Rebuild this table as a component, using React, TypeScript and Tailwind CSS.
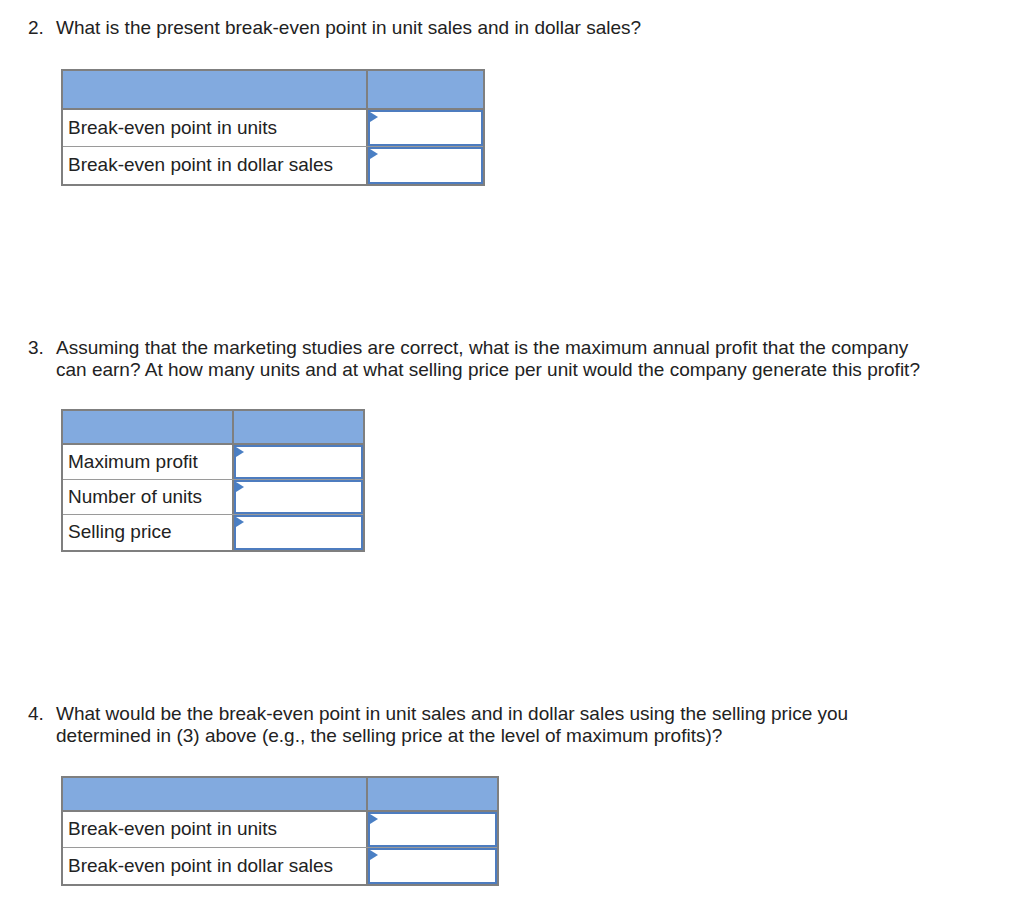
import React from 'react';

interface AnswerTableProps {
  rows: string[];
  labelWidth: number;
  valueWidth: number;
  headerHeight: number;
  rowHeight: number;
}

function InputCell() {
  return (
    <div className="relative h-full w-full border-2 border-[#4d7cbf] bg-white">
      <svg className="absolute left-0 top-0" width="8" height="11" viewBox="0 0 8 11">
        <polygon points="0,0 8,5 0,10" fill="#4a7fc4" />
      </svg>
    </div>
  );
}

function AnswerTable({ rows, labelWidth, valueWidth, headerHeight, rowHeight }: AnswerTableProps) {
  return (
    <div className="ml-[61px] inline-block border-2 border-[#7f7f7f] bg-white">
      <div className="flex border-b-2 border-[#7f7f7f] bg-[#82aadf]" style={{ height: headerHeight - 2 }}>
        <div className="border-r-2 border-[#7f7f7f]" style={{ width: labelWidth }} />
        <div style={{ width: valueWidth }} />
      </div>
      {rows.map((label, i) => (
        <div
          key={label}
          className={`flex ${i < rows.length - 1 ? 'border-b border-[#9a9a9a]' : ''}`}
          style={{ height: rowHeight }}
        >
          <div
            className="flex items-center border-r-2 border-[#7f7f7f] pl-[5px] text-[19px] text-[#222]"
            style={{ width: labelWidth }}
          >
            {label}
          </div>
          <div style={{ width: valueWidth }}>
            <InputCell />
          </div>
        </div>
      ))}
    </div>
  );
}

function Question({ num, children }: { num: string; children: React.ReactNode }) {
  return (
    <div className="flex text-[19px] leading-[22px] text-[#222]">
      <div className="w-[56px] shrink-0 pl-[28px]">{num}</div>
      <div className="w-[900px]">{children}</div>
    </div>
  );
}

export default function App() {
  return (
    <div className="min-h-[923px] w-[1024px] bg-white pt-[17px]" style={{ fontFamily: '"Liberation Sans", Arial, sans-serif' }}>
      <Question num="2.">What is the present break-even point in unit sales and in dollar sales?</Question>
      <div className="mt-[30px]">
        <AnswerTable
          rows={['Break-even point in units', 'Break-even point in dollar sales']}
          labelWidth={305}
          valueWidth={115}
          headerHeight={41}
          rowHeight={37}
        />
      </div>

      <div className="mt-[151px]">
        <Question num="3.">
          Assuming that the marketing studies are correct, what is the maximum annual profit that the company
          <br />
          can earn? At how many units and at what selling price per unit would the company generate this profit?
        </Question>
      </div>
      <div className="mt-[28px]">
        <AnswerTable
          rows={['Maximum profit', 'Number of units', 'Selling price']}
          labelWidth={171}
          valueWidth={129}
          headerHeight={36}
          rowHeight={35}
        />
      </div>

      <div className="mt-[151px]">
        <Question num="4.">
          What would be the break-even point in unit sales and in dollar sales using the selling price you
          <br />
          determined in (3) above (e.g., the selling price at the level of maximum profits)?
        </Question>
      </div>
      <div className="mt-[29px]">
        <AnswerTable
          rows={['Break-even point in units', 'Break-even point in dollar sales']}
          labelWidth={305}
          valueWidth={129}
          headerHeight={36}
          rowHeight={36}
        />
      </div>
    </div>
  );
}
